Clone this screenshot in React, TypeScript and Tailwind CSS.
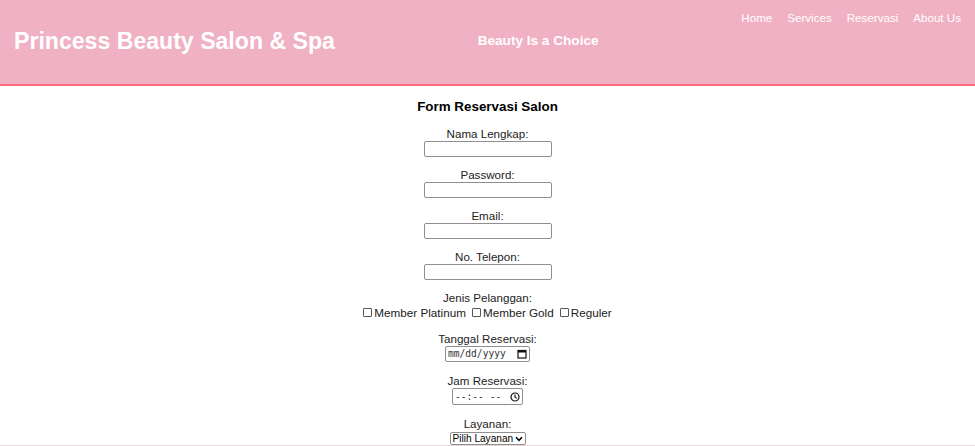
import React from "react";

const font = { fontFamily: '"Liberation Sans", Arial, sans-serif' };

function Field({ label, children }: { label: string; children: React.ReactNode }) {
  return (
    <div className="flex flex-col items-center mb-[11px]">
      <label className="text-[11.6px] leading-[14px] text-[#222]">{label}</label>
      {children}
    </div>
  );
}

function TextInput({ type = "text" }: { type?: string }) {
  return (
    <input
      type={type}
      className="w-[128px] h-[16px] border border-[#8f8f8f] rounded-[2px] bg-white outline-none"
    />
  );
}

function Box({ first }: { first?: boolean }) {
  return (
    <span
      className={
        first
          ? "inline-block w-[9px] h-[9px] border border-[#555] rounded-[1px] mr-[2px]"
          : "inline-block w-[9px] h-[9px] border border-[#555] rounded-[1px] ml-[6px] mr-[2px]"
      }
    />
  );
}

export default function App() {
  return (
    <div style={font} className="w-[975px] h-[446px] overflow-hidden bg-white">
      <header className="h-[86px] bg-[#f1b1c4] border-b-2 border-[#ff6b7d] flex justify-between items-start px-[14px]">
        <h1 className="mt-[26px] text-[23.1px] leading-[30px] font-bold text-white">
          Princess Beauty Salon &amp; Spa
        </h1>
        <p className="mt-[32px] text-[13.6px] leading-[18px] font-bold text-white">Beauty Is a Choice</p>
        <nav className="mt-[10px] flex gap-[15px] text-[11.6px] leading-[16px] text-white">
          <a>Home</a>
          <a>Services</a>
          <a>Reservasi</a>
          <a>About Us</a>
        </nav>
      </header>

      <main className="flex flex-col items-center">
        <h2 className="mt-[13px] mb-[12px] text-[13.4px] leading-[16px] font-bold text-black">
          Form Reservasi Salon
        </h2>
        <Field label="Nama Lengkap:">
          <TextInput />
        </Field>
        <Field label="Password:">
          <TextInput type="password" />
        </Field>
        <Field label="Email:">
          <TextInput type="email" />
        </Field>
        <Field label="No. Telepon:">
          <TextInput type="tel" />
        </Field>
        <div className="flex flex-col items-center mb-[12px]">
          <label className="text-[11.6px] leading-[14px] text-[#222]">Jenis Pelanggan:</label>
          <div className="flex items-center h-[15px] text-[11.7px] leading-[14px] text-[#222]">
            <Box first />
            <span>Member Platinum</span>
            <Box />
            <span>Member Gold</span>
            <Box />
            <span>Reguler</span>
          </div>
        </div>
        <div className="flex flex-col items-center mb-[12px]">
          <label className="text-[11.6px] leading-[14px] text-[#222]">Tanggal Reservasi:</label>
          <div className="w-[85px] h-[16px] border border-[#8f8f8f] rounded-[2px] flex items-center justify-between px-[2px]">
            <span className="whitespace-nowrap text-[#333]" style={{ fontFamily: '"DejaVu Sans Mono", monospace', fontSize: "9.6px", lineHeight: "12px" }}>
              mm/dd/yyyy
            </span>
            <svg width="10" height="10" viewBox="0 0 10 10">
              <rect x="1" y="1.5" width="8" height="7.5" fill="none" stroke="#111" strokeWidth="1.2" />
              <rect x="1" y="1.5" width="8" height="2" fill="#111" />
            </svg>
          </div>
        </div>
        <div className="flex flex-col items-center mb-[12px]">
          <label className="text-[11.6px] leading-[14px] text-[#222]">Jam Reservasi:</label>
          <div className="w-[71px] h-[17px] border border-[#8f8f8f] rounded-[2px] flex items-center justify-between px-[2px]">
            <span className="whitespace-nowrap text-[#333]" style={{ fontFamily: '"DejaVu Sans Mono", monospace', fontSize: "9.6px", lineHeight: "12px" }}>
              --:-- --
            </span>
            <svg width="10" height="10" viewBox="0 0 10 10">
              <circle cx="5" cy="5" r="4" fill="none" stroke="#111" strokeWidth="1.2" />
              <path d="M5 2.6V5.2L6.8 6.4" fill="none" stroke="#111" strokeWidth="1.1" />
            </svg>
          </div>
        </div>
        <div className="flex flex-col items-center">
          <label className="text-[11.6px] leading-[14px] text-[#222]">Layanan:</label>
          <div className="mt-[1px] w-[76px] h-[13px] border border-[#8f8f8f] rounded-[2px] flex items-center justify-between pl-[2px] pr-[2px] text-black">
            <span className="whitespace-nowrap text-[10.1px] leading-[11px]">Pilih Layanan</span>
            <svg width="8" height="6" viewBox="0 0 8 6" className="shrink-0">
              <path d="M1 1.2L4 4.3L7 1.2" fill="none" stroke="#000" strokeWidth="1.5" />
            </svg>
          </div>
        </div>
        <div className="w-full h-[2px] bg-[#e8d5d8]" />
      </main>
    </div>
  );
}
